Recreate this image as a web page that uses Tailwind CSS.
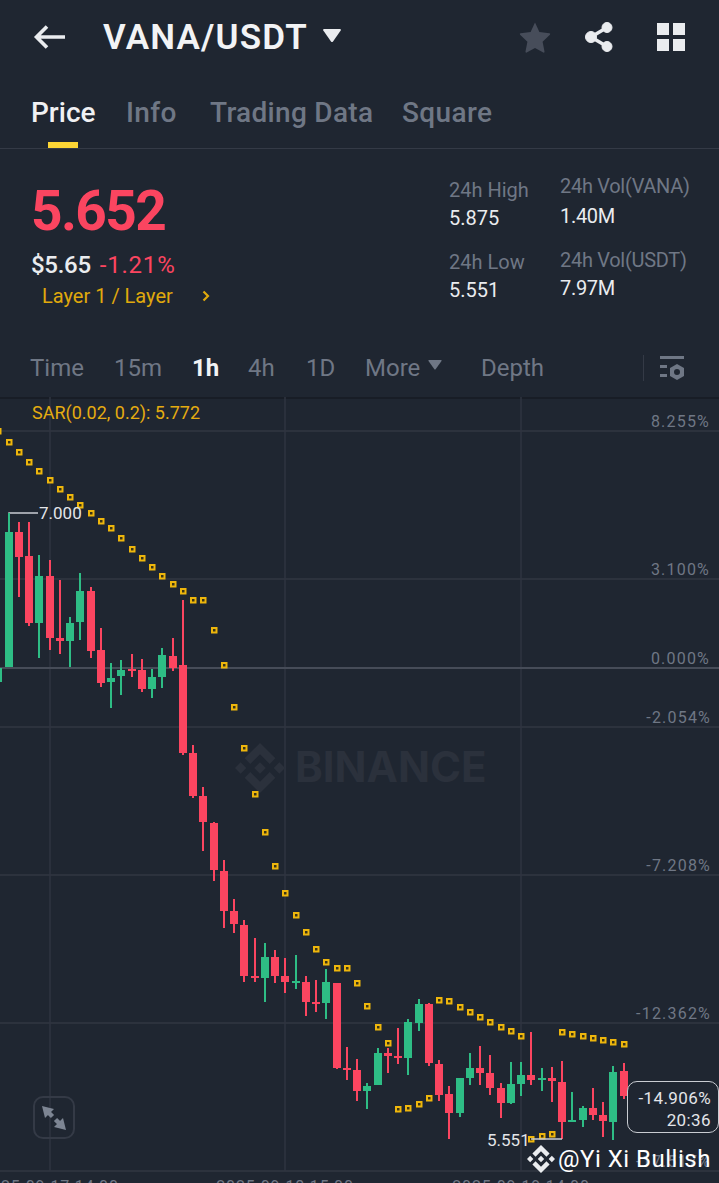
<!DOCTYPE html>
<html lang="en">
<head>
  <meta charset="UTF-8" />
  <meta name="viewport" content="width=device-width, initial-scale=1.0" />
  <title>VANA/USDT</title>
  <script src="https://cdn.jsdelivr.net/npm/@tailwindcss/browser@4"></script>
</head>
<body class="bg-[#1f2631] font-['Roboto',sans-serif]">
  <div class="w-[719px] h-[1183px] overflow-hidden flex flex-col">

    <!-- header -->
    <header class="h-[74px] flex items-center shrink-0">
      <svg class="ml-[33px] w-[34px] h-[28px]" viewBox="0 0 34 28" fill="none" stroke="#eaecef" stroke-width="3.6">
        <path d="M32 14H4M14 3.500L3.500 14L14 24.500" />
      </svg>
      <h1 class="ml-[36px] mt-[2px] text-[35px] font-semibold text-[#f2f3f5] tracking-[1.2px]">VANA/USDT</h1>
      <svg class="ml-[14px] mb-[3px] w-[20px] h-[15px]" viewBox="0 0 20 15" fill="#eaecef">
        <path d="M2 1h16q1.500 0 .7 1.500L11 13.500q-1 1.200-2 0L1.300 2.500Q.500 1 2 1z" />
      </svg>
      <svg class="ml-[176px] w-[34px] h-[32px]" viewBox="0 0 34 32" fill="#474d5a">
        <path d="M17 1.500l4.400 9.400 10 1.300q1.500.3.500 1.500l-7.300 7 1.900 9.800q.2 1.500-1.200 1L17 27l-8.300 4.500q-1.400.5-1.200-1l1.900-9.800-7.300-7q-1-1.200.5-1.500l10-1.300z" />
      </svg>
      <svg class="ml-[32px] w-[30px] h-[32px]" viewBox="0 0 30 32" fill="#eaecef" stroke="#eaecef">
        <circle cx="7" cy="16" r="5.500" />
        <circle cx="23" cy="6.500" r="5" />
        <circle cx="23" cy="25.500" r="5" />
        <path d="M7 16L23 6.500M7 16L23 25.500" stroke-width="3.500" />
      </svg>
      <div class="ml-[43px] w-[28px] grid grid-cols-2 gap-x-[4px] gap-y-[4px]">
        <span class="h-[12px] bg-[#eaecef]"></span>
        <span class="h-[12px] bg-[#eaecef]"></span>
        <span class="h-[12px] bg-[#eaecef]"></span>
        <span class="h-[12px] bg-[#eaecef]"></span>
      </div>
    </header>

    <!-- tabs -->
    <nav class="h-[75px] shrink-0 border-b border-[#343a46] flex text-[28px] leading-[38px] font-medium text-[#6f7785] pl-[31px] pt-[20px]">
      <a class="relative w-[95px] text-[#f0f1f3]">Price
        <span class="absolute left-[17px] top-[48px] w-[30px] h-[6px] bg-[#fcd535]"></span>
      </a>
      <a class="w-[84px] tracking-[0.4px]">Info</a>
      <a class="w-[192px] tracking-[0.3px]">Trading Data</a>
      <a class="tracking-[0.4px]">Square</a>
    </nav>

    <!-- market stats -->
    <section class="h-[194px] shrink-0 flex relative">
      <div class="w-[449px] pl-[31px]">
        <p class="mt-[30px] text-[55px] leading-[64px] font-bold text-[#fb4560] tracking-[-1.6px]">5.652</p>
        <p class="mt-[6px] leading-[32px] text-[24px] font-medium text-[#eaecef] tracking-[-0.3px]">$5.65<span class="ml-[9px] font-normal text-[#fb4560] tracking-[0.8px]">-1.21%</span></p>
        <p class="ml-[11px] flex items-center text-[20px] leading-[30px] text-[#e0a90c]">Layer 1 / Layer
          <svg class="ml-[28px] w-[10px] h-[12px]" viewBox="0 0 10 12" fill="none" stroke="#e0a90c" stroke-width="2.200"><path d="M2.500 1.500L7 6L2.500 10.500" /></svg>
        </p>
      </div>
      <dl class="w-[111px] pt-[27px] text-[20px] leading-[28px]">
        <dt class="text-[#6f7785]">24h High</dt>
        <dd class="text-[#eaecef]">5.875</dd>
        <dt class="mt-[16px] text-[#6f7785]">24h Low</dt>
        <dd class="text-[#eaecef]">5.551</dd>
      </dl>
      <dl class="pt-[23px] text-[20px] leading-[28px] whitespace-nowrap tracking-[-0.3px]">
        <dt class="text-[#6f7785]">24h Vol(VANA)</dt>
        <dd class="mt-[2px] text-[#eaecef]">1.40M</dd>
        <dt class="mt-[16px] text-[#6f7785]">24h Vol(USDT)</dt>
        <dd class="text-[#eaecef]">7.97M</dd>
      </dl>
    </section>

    <!-- time frames -->
    <div class="h-[54px] shrink-0 flex items-center text-[24px] text-[#6f7785] pl-[30px] pb-[5px]">
      <span class="w-[84px]">Time</span>
      <span class="w-[78px]">15m</span>
      <span class="w-[56px] font-bold text-[#f2f3f5]">1h</span>
      <span class="w-[58px]">4h</span>
      <span class="w-[59px]">1D</span>
      <span class="w-[63px]">More</span>
      <svg class="w-[14px] h-[10px] mb-[5px]" viewBox="0 0 14 10" fill="#6f7785"><path d="M1 0h12q1 0 .5 1L7.800 9q-.8 1-1.600 0L.5 1Q0 0 1 0z" /></svg>
      <span class="ml-[39px] w-[162px]">Depth</span>
      <span class="w-px h-[26px] bg-[#343a46]"></span>
      <svg class="ml-[16px] w-[24px] h-[24px]" viewBox="0 0 24 24" fill="#6f7785">
        <path d="M0 0h24v3H0zM0 9h7v3H0zM0 18h7v3H0z" />
        <path fill-rule="evenodd" d="M17 8l7 4v8l-7 4-7-4v-8zM17 13a3 3 0 1 0 0 6a3 3 0 0 0 0-6z" />
      </svg>
    </div>

    <!-- chart -->
    <div class="relative h-[786px] shrink-0 border-t-2 border-[#181d26]">
      <svg id="chart" class="absolute left-0 top-[-2px] w-[719px] h-[786px] font-['Roboto',sans-serif]" viewBox="0 397 719 786">
        <g stroke="#2c323d" stroke-width="2">
          <path d="M0 431H719M0 579H719M0 727H719M0 875H719M0 1023H719M0 1171H719" />
        </g>
        <path d="M50 397V1171M285 397V1171M521 397V1171" stroke="#2f3540" stroke-width="1.500" />
        <path d="M0 668H719" stroke="#464c58" stroke-width="2" />

        <!-- watermark -->
        <g fill="#2b313c">
          <g transform="translate(235 743) scale(0.395)">
            <path d="M38.730 53.200L63.300 28.630L87.890 53.220L102.190 38.920L63.300 0L24.420 38.900zM0 63.300L14.300 49L28.600 63.300L14.300 77.610zM38.730 73.410L63.300 97.980L87.890 73.390L102.200 87.690L63.300 126.610L24.420 87.710zM98 63.310L112.300 49L126.610 63.310L112.300 77.610zM77.810 63.300L63.300 48.780L48.800 63.280L63.300 77.800z" />
          </g>
          <text x="295" y="782" font-size="42" font-weight="700" font-family="Inter, sans-serif">BINANCE</text>
        </g>

        <g id="candles"></g>
        <g id="dots"></g>

        <!-- axis labels -->
        <g fill="#6f7785" font-size="16" text-anchor="end" letter-spacing="1.200">
          <text x="710" y="427">8.255%</text>
          <text x="710" y="575">3.100%</text>
          <text x="710" y="664">0.000%</text>
          <text x="711" y="723">-2.054%</text>
          <text x="711" y="871">-7.208%</text>
          <text x="711" y="1019">-12.362%</text>
          <text x="711" y="1167">-17.517%</text>
        </g>
        <g fill="#6f7785" font-size="16" text-anchor="middle" letter-spacing="0.800">
          <text x="50" y="1192">2025-09-17 14:00</text>
          <text x="285" y="1192">2025-09-18 15:00</text>
          <text x="521" y="1192">2025-09-19 14:00</text>
        </g>

        <!-- high and low markers -->
        <path d="M9 532V513H38" fill="none" stroke="#c9ccd2" stroke-width="1.500" />
        <path d="M9 532V513" fill="none" stroke="#2ebd85" stroke-width="2" />
        <text x="39" y="519" font-size="17" fill="#e3e5e9">7.000</text>
        <path d="M531 1139H562" stroke="#c9ccd2" stroke-width="1.500" />
        <text x="487" y="1146" font-size="17" fill="#e3e5e9">5.551</text>
      </svg>

      <div class="absolute left-[32px] top-[3px] text-[18px] leading-[22px] text-[#e5ac10]">SAR(0.02, 0.2): 5.772</div>

      <button class="absolute left-[33px] top-[697px] w-[42px] h-[43px] rounded-[10px] border-2 border-[#343a46] flex items-center justify-center">
        <svg class="w-[26px] h-[26px]" viewBox="0 0 26 26" fill="#7d8593" stroke="#7d8593">
          <path d="M1 1L13 4L4 13z" stroke="none" />
          <path d="M25 25L13 22L22 13z" stroke="none" />
          <path d="M6 6L11.500 11.500M20 20L14.500 14.500" stroke-width="4.500" />
        </svg>
      </button>

      <div class="absolute left-[627px] top-[682px] w-[92px] h-[52px] rounded-[10px] border-[1.500px] border-[#c9ccd2] bg-[#1f2631] text-right text-[17px] leading-[22px] text-[#e3e5e9] pr-[7px] pt-[5px] tracking-[0.4px]">
        <p>-14.906%</p>
        <p>20:36</p>
      </div>

      <!-- repost mark -->
      <div class="absolute left-[527px] top-[745px] flex items-center text-[24px] leading-[30px] text-white tracking-[0.5px]">
        <svg class="w-[28px] h-[28px]" viewBox="0 0 126.610 126.610" fill="#eaecef">
          <path d="M38.730 53.200L63.300 28.630L87.890 53.220L102.190 38.920L63.300 0L24.420 38.900zM0 63.300L14.300 49L28.600 63.300L14.300 77.610zM38.730 73.410L63.300 97.980L87.890 73.390L102.200 87.690L63.300 126.610L24.420 87.710zM98 63.310L112.300 49L126.610 63.310L112.300 77.610zM77.810 63.300L63.300 48.780L48.800 63.280L63.300 77.800z" />
        </svg>
        <span class="ml-[3px] whitespace-nowrap">@Yi Xi Bullish</span>
      </div>
    </div>
  </div>

  <script>
    const NS = 'http://www.w3.org/2000/svg';
    const GREEN = '#2ebd85';
    const RED = '#fb4560';

    // colour, wick top, body top, body bottom, wick bottom
    const candles = [
      ['g',667,668,682,682],['g',513,532,667,667],['r',522,532,557,597],['r',522,556,623,626],
      ['g',555,576,623,658],['r',560,576,638,650],['r',580,638,641,654],['g',617,623,641,667],
      ['g',573,591,622,640],['r',587,591,651,658],['r',628,650,683,687],['g',663,678,682,708],
      ['g',660,670,676,695],['r',654,669,671,677],['r',659,670,689,692],['g',669,677,689,698],
      ['g',648,655,677,688],['r',638,656,668,671],['r',600,665,753,755],['r',745,753,796,798],
      ['r',787,796,822,851],['r',822,823,870,881],['r',860,871,911,928],['r',899,911,924,933],
      ['r',920,925,976,982],['r',938,976,978,982],['g',943,957,978,1002],['r',950,957,976,983],
      ['r',958,976,982,993],['g',955,981,982,989],['r',976,982,1002,1016],['r',980,1002,1004,1012],
      ['g',969,982,1003,1019],['r',983,983,1068,1069],['r',1047,1068,1069,1080],['r',1059,1070,1091,1101],
      ['g',1083,1086,1091,1109],['g',1048,1053,1085,1085],['r',1048,1053,1056,1073],['r',1028,1056,1058,1064],
      ['g',1019,1022,1058,1075],['g',999,1004,1023,1031],['r',1003,1004,1063,1066],['r',1060,1064,1095,1101],
      ['r',1086,1094,1113,1139],['g',1078,1078,1113,1117],['g',1053,1068,1078,1085],['r',1046,1068,1073,1085],
      ['r',1055,1073,1088,1095],['r',1083,1088,1103,1118],['g',1062,1084,1103,1104],['g',1062,1075,1084,1096],
      ['r',1032,1075,1080,1085],['g',1068,1078,1080,1091],['r',1067,1078,1081,1102],['r',1061,1082,1122,1139],
      ['g',1092,1120,1122,1122],['g',1106,1108,1120,1127],['r',1088,1108,1115,1120],['r',1102,1115,1121,1137],
      ['g',1066,1072,1122,1140],['r',1063,1071,1096,1099]
    ];

    // SAR dots: candle index, y
    const sar = [
      [-1,431],[0,442],[1,452],[2,462],[3,471],[4,480],[5,489],[6,497],[7,505],[8,513],[9,521],[10,528],
      [11,538],[12,549],[13,558],[14,567],[15,576],[16,584],[17,591],[18,600],[19,600],[20,630],[21,665],
      [22,707],[23,748],[24,794],[25,832],[26,866],[27,893],[28,915],[29,932],[30,949],[31,962],[32,968],
      [33,968],[34,983],[35,1006],[36,1027],[37,1043],[38,1109],[39,1108],[40,1104],[41,1098],
      [42,1000],[43,1001],[44,1007],[45,1012],[46,1017],[47,1022],[48,1027],[49,1031],[50,1036],
      [51,1139],[52,1136],[53,1134],[54,1032],[55,1034],[56,1036],[57,1038],[58,1040],[59,1042],[60,1044]
    ];

    const xAt = i => 8.6 + 10.25 * i;

    function add(parent, tag, attrs) {
      const el = document.createElementNS(NS, tag);
      for (const k in attrs) el.setAttribute(k, attrs[k]);
      parent.appendChild(el);
    }

    const candleLayer = document.getElementById('candles');
    candles.forEach((c, n) => {
      const x = Math.round(xAt(n - 1));
      const fill = c[0] === 'g' ? GREEN : RED;
      add(candleLayer, 'rect', { x: x - 1, y: c[1], width: 2, height: c[4] - c[1], fill });
      add(candleLayer, 'rect', { x: x - 4, y: c[2], width: 8, height: Math.max(c[3] - c[2], 2), fill });
    });

    const dotLayer = document.getElementById('dots');
    sar.forEach(([i, y]) => {
      const x = Math.round(xAt(i));
      add(dotLayer, 'rect', { x: x - 3, y: y - 3, width: 6.5, height: 6.5, fill: '#eeb60c' });
      add(dotLayer, 'rect', { x: x - 1, y: y - 1, width: 2.5, height: 2.5, fill: '#3a3415' });
    });
  </script>
</body>
</html>
